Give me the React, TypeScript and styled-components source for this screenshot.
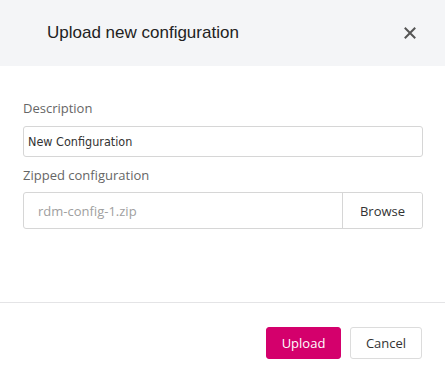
import React from "react";
import styled, { createGlobalStyle } from "styled-components";

const GlobalStyle = createGlobalStyle`
  html, body {
    margin: 0;
    padding: 0;
    background: #ffffff;
  }
  * {
    box-sizing: border-box;
  }
`;

export default function App() {
  return (
    <>
      <GlobalStyle />
      <Dialog>
        <Header>
          <Title>Upload new configuration</Title>
          <CloseButton aria-label="Close">
            <svg width="12" height="12" viewBox="0 0 12 12">
              <path
                d="M1.5 1.5 L10.5 10.5 M10.5 1.5 L1.5 10.5"
                stroke="#555"
                strokeWidth="2"
                strokeLinecap="square"
              />
            </svg>
          </CloseButton>
        </Header>
        <Body>
          <Label>Description</Label>
          <TextInput defaultValue="New Configuration" />
          <Label $spaced>Zipped configuration</Label>
          <FileField>
            <FileName>rdm-config-1.zip</FileName>
            <BrowseButton>Browse</BrowseButton>
          </FileField>
        </Body>
        <Footer>
          <Button $primary>Upload</Button>
          <Button>Cancel</Button>
        </Footer>
      </Dialog>
    </>
  );
}

const Dialog = styled.div`
  width: 445px;
  height: 381px;
  background: #fff;
  display: flex;
  flex-direction: column;
`;

const Header = styled.div`
  height: 66px;
  background: #f4f5f7;
  display: flex;
  align-items: center;
  justify-content: space-between;
  padding: 0 27px 0 47px;
`;

const Title = styled.h2`
  margin: 0;
  font-family: "Liberation Sans", Arial, sans-serif;
  font-size: 17px;
  font-weight: 400;
  color: #222;
`;

const CloseButton = styled.button`
  border: none;
  background: transparent;
  padding: 0;
  width: 16px;
  height: 16px;
  display: flex;
  align-items: center;
  justify-content: center;
  cursor: pointer;
`;

const Body = styled.div`
  padding: 33px 22px 0 23px;
  height: 237px;
  display: flex;
  flex-direction: column;
  border-bottom: 1px solid #e4e4e6;
`;

const Label = styled.label<{ $spaced?: boolean }>`
  font-family: "Open Sans", sans-serif;
  font-size: 13px;
  line-height: 18px;
  color: #666;
  margin-top: ${(p) => (p.$spaced ? "9px" : "0")};
  margin-bottom: ${(p) => (p.$spaced ? "8px" : "9px")};
`;

const TextInput = styled.input`
  height: 31px;
  width: 100%;
  border: 1px solid #d6d6d6;
  border-radius: 3px;
  padding: 0 4px;
  font-family: "DejaVu Sans Condensed", "DejaVu Sans", sans-serif;
  font-size: 12.5px;
  color: #333;
  outline: none;
`;

const FileField = styled.div`
  height: 37px;
  display: flex;
  border: 1px solid #d6d6d6;
  border-radius: 3px;
  font-family: "Open Sans", sans-serif;
  font-size: 13px;
`;

const FileName = styled.div`
  flex: 1;
  display: flex;
  align-items: center;
  padding-left: 14px;
  color: #a0a0a0;
`;

const BrowseButton = styled.button`
  width: 80px;
  border: none;
  border-left: 1px solid #d6d6d6;
  background: #fff;
  border-radius: 0 3px 3px 0;
  font-family: "Open Sans", sans-serif;
  font-size: 13px;
  color: #333;
  padding: 0;
`;

const Footer = styled.div`
  display: flex;
  justify-content: flex-end;
  gap: 9px;
  padding: 24px 23px 0 0;
`;

const Button = styled.button<{ $primary?: boolean }>`
  height: 32px;
  min-width: ${(p) => (p.$primary ? "75px" : "72px")};
  padding: 0 12px;
  border-radius: 3px;
  font-family: "Open Sans", sans-serif;
  font-size: 13px;
  border: 1px solid ${(p) => (p.$primary ? "#d4006c" : "#dcdcdc")};
  background: ${(p) => (p.$primary ? "#d4006c" : "#fff")};
  color: ${(p) => (p.$primary ? "#fff" : "#333")};
  cursor: pointer;
`;
